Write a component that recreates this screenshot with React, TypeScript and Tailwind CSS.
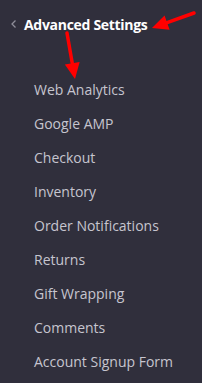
import React from 'react';

const items = [
    'Web Analytics',
    'Google AMP',
    'Checkout',
    'Inventory',
    'Order Notifications',
    'Returns',
    'Gift Wrapping',
    'Comments',
    'Account Signup Form',
];

// red annotation arrows drawn over the menu
function Arrow({ x1, y1, x2, y2 }: { x1: number; y1: number; x2: number; y2: number }) {
    const a = Math.atan2(y2 - y1, x2 - x1);
    const len = 16;
    const w = 7.5;
    const bx = x2 - Math.cos(a) * len;
    const by = y2 - Math.sin(a) * len;
    const px = -Math.sin(a) * w;
    const py = Math.cos(a) * w;
    return (
        <g fill="#ff0000" stroke="#ff0000">
            <line x1={x1} y1={y1} x2={bx} y2={by} strokeWidth={3.5} strokeLinecap="round" />
            <polygon points={`${x2},${y2} ${bx + px},${by + py} ${bx - px},${by - py}`} stroke="none" />
        </g>
    );
}

export default function App() {
    return (
        <div
            className="relative w-[202px] h-[383px] bg-[#302f3c] overflow-hidden"
            style={{ fontFamily: '"Open Sans", "Noto Sans", sans-serif' }}
        >
            <div className="h-12 flex items-center pl-[10px]">
                <svg width="8" height="10" viewBox="0 0 8 10" className="mr-[6px]">
                    <path d="M5.5 1.5 L2 5 L5.5 8.5" fill="none" stroke="#8e8d99" strokeWidth="1.3" />
                </svg>
                <span className="text-[14px] font-bold text-white tracking-[-0.3px]">Advanced Settings</span>
            </div>
            <ul className="mt-6 pl-[34px]">
                {items.map((item) => (
                    <li key={item} className="h-[34px] flex items-center text-[14px] text-[#c6c5cf]">
                        {item}
                    </li>
                ))}
            </ul>
            <svg className="absolute inset-0 pointer-events-none" width="202" height="383">
                <Arrow x1={194} y1={13} x2={152} y2={28} />
                <Arrow x1={67} y1={33} x2={75} y2={79} />
            </svg>
        </div>
    );
}
